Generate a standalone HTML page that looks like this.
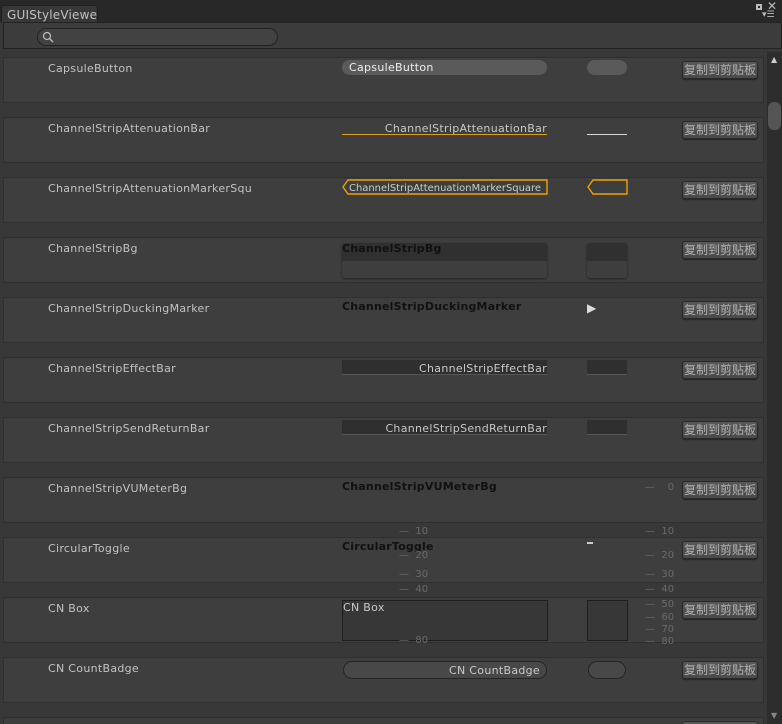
<!DOCTYPE html>
<html><head><meta charset="utf-8"><style>
*{box-sizing:border-box;margin:0;padding:0}
html,body{width:782px;height:724px;overflow:hidden}
body{background:#383838;position:relative;font-family:"DejaVu Sans","Noto Sans CJK SC",sans-serif;font-size:11px;color:#c4c4c4}
.a{position:absolute}
.row{position:absolute;left:3px;width:761px;height:46px;background:#3e3e3e;border:1px solid #2f2f2f}
.lbl{position:absolute;left:48px;font-size:11px;color:#c2c2c2;letter-spacing:.3px}
.btn{position:absolute;left:682px;width:76px;height:18px;background:linear-gradient(#585858,#4a4a4a);border:1px solid #2a2a2a;border-radius:3px;color:#b0b0b0;font-size:12px;font-family:"Noto Sans CJK SC",sans-serif;text-align:center;line-height:16px;box-shadow:0 1px 1px #222}
.b{font-weight:bold;color:#111;font-family:"DejaVu Sans",sans-serif;font-size:11px;letter-spacing:.2px}
.sc{position:absolute;color:#6a6a6a;font-size:10px}
.pt{font-size:11px;color:#c8c8c8;letter-spacing:.3px}
</style></head><body>
<div class="a" style="left:0;top:0;width:782px;height:22px;background:#282828"></div>
<div class="a" style="left:1px;top:5px;width:97px;height:18px;background:#383838;border:1px solid #1f1f1f;border-bottom:none;border-radius:3px 3px 0 0;color:#c0c0c0;font-size:12px;padding:2px 0 0 5px;letter-spacing:.2px">GUIStyleViewe</div>
<div class="a" style="left:756px;top:4px;width:6px;height:6px;border:2px solid #bbb"></div>
<div class="a" style="left:767px;top:-1px;color:#bbb;font-size:12px">✕</div>
<div class="a" style="left:762px;top:10px;color:#bbb;font-size:9px">▾☰</div>
<div class="a" style="left:3px;top:22px;width:779px;height:27px;background:#3c3c3c;border:1px solid #232323"></div>
<div class="a" style="left:37px;top:28px;width:241px;height:18px;background:#424242;border:1px solid #222;border-radius:9px"></div>
<svg class="a" style="left:42px;top:31px" width="12" height="12"><circle cx="5" cy="5" r="3.5" fill="none" stroke="#bbb" stroke-width="1.3"/><line x1="7.5" y1="7.5" x2="11" y2="11" stroke="#bbb" stroke-width="1.4"/></svg>
<div class="a" style="left:767px;top:52px;width:15px;height:672px;background:#2d2d2d"></div>
<div class="a" style="left:771px;top:55px;color:#ccc;font-size:8px">▲</div>
<div class="a" style="left:768px;top:102px;width:13px;height:28px;background:#555;border-radius:6px"></div>
<div class="a" style="left:771px;top:711px;color:#888;font-size:8px">▼</div>

<div class="row" style="top:57px"></div><div class="lbl" style="top:62px">CapsuleButton</div>
<div class="a pt" style="left:342px;top:60px;width:205px;height:15px;background:#5a5a5a;border-radius:8px;color:#eee;padding:1px 0 0 7px">CapsuleButton</div>
<div class="a" style="left:587px;top:60px;width:40px;height:15px;background:#5a5a5a;border-radius:8px"></div>
<div class="btn" style="top:61px">复制到剪贴板</div>

<div class="row" style="top:117px"></div><div class="lbl" style="top:122px">ChannelStripAttenuationBar</div>
<div class="a pt" style="left:342px;top:120px;width:205px;height:15px;border-bottom:1px solid #d8a020;text-align:right;padding-top:2px">ChannelStripAttenuationBar</div>
<div class="a" style="left:587px;top:120px;width:40px;height:15px;border-bottom:1px solid #d8d8d8"></div>
<div class="btn" style="top:121px">复制到剪贴板</div>

<div class="row" style="top:177px"></div><div class="lbl" style="top:182px">ChannelStripAttenuationMarkerSqu</div>
<svg class="a" style="left:341px;top:179px" width="208" height="17"><path d="M7 1H206V15H7L2 8Z" fill="none" stroke="#f0a000" stroke-width="1.4"/><text x="8" y="12" font-size="9.5" fill="#ccc" font-family="DejaVu Sans" textLength="192" lengthAdjust="spacingAndGlyphs">ChannelStripAttenuationMarkerSquare</text></svg>
<svg class="a" style="left:586px;top:179px" width="43" height="17"><path d="M7 1H41V15H7L2 8Z" fill="none" stroke="#f0a000" stroke-width="1.4"/></svg>
<div class="btn" style="top:181px">复制到剪贴板</div>

<div class="row" style="top:237px"></div><div class="lbl" style="top:242px">ChannelStripBg</div>
<div class="a" style="left:342px;top:243px;width:205px;height:35px;background:linear-gradient(#303030 0 18px,#3e3e3e 18px);border-radius:3px;box-shadow:0 1px 2px #222"><span class="b" style="position:absolute;left:0;top:-1px">ChannelStripBg</span></div>
<div class="a" style="left:587px;top:243px;width:40px;height:35px;background:linear-gradient(#303030 0 18px,#3e3e3e 18px);border-radius:3px;box-shadow:0 1px 2px #222"></div>
<div class="btn" style="top:241px">复制到剪贴板</div>

<div class="row" style="top:297px"></div><div class="lbl" style="top:302px">ChannelStripDuckingMarker</div>
<div class="a b" style="left:342px;top:300px">ChannelStripDuckingMarker</div>
<div class="a" style="left:587px;top:301px;color:#ddd;font-size:12px">▶</div>
<div class="btn" style="top:301px">复制到剪贴板</div>

<div class="row" style="top:357px"></div><div class="lbl" style="top:362px">ChannelStripEffectBar</div>
<div class="a pt" style="left:342px;top:360px;width:205px;height:15px;background:#2f2f2f;border-bottom:1px solid #555;text-align:right;padding-top:2px">ChannelStripEffectBar</div>
<div class="a" style="left:587px;top:360px;width:40px;height:15px;background:#2f2f2f;border-bottom:1px solid #555"></div>
<div class="btn" style="top:361px">复制到剪贴板</div>

<div class="row" style="top:417px"></div><div class="lbl" style="top:422px">ChannelStripSendReturnBar</div>
<div class="a pt" style="left:342px;top:420px;width:205px;height:15px;background:#2f2f2f;border-bottom:1px solid #555;text-align:right;padding-top:2px">ChannelStripSendReturnBar</div>
<div class="a" style="left:587px;top:420px;width:40px;height:15px;background:#2f2f2f;border-bottom:1px solid #555"></div>
<div class="btn" style="top:421px">复制到剪贴板</div>

<div class="row" style="top:477px"></div><div class="lbl" style="top:482px">ChannelStripVUMeterBg</div>
<div class="a b" style="left:342px;top:480px">ChannelStripVUMeterBg</div>
<div class="btn" style="top:481px">复制到剪贴板</div>

<div class="row" style="top:537px"></div><div class="lbl" style="top:542px">CircularToggle</div>
<div class="a b" style="left:342px;top:540px">CircularToggle</div>
<div class="a" style="left:587px;top:542px;width:6px;height:2px;background:#ccc"></div>
<div class="btn" style="top:541px">复制到剪贴板</div>

<div class="row" style="top:597px"></div><div class="lbl" style="top:602px">CN Box</div>
<div class="a pt" style="left:342px;top:600px;width:206px;height:41px;background:#373737;border:1px solid #1e1e1e">CN Box</div>
<div class="a" style="left:587px;top:600px;width:41px;height:41px;background:#373737;border:1px solid #1e1e1e"></div>
<div class="btn" style="top:601px">复制到剪贴板</div>

<div class="sc" style="left:399px;top:526px">—&nbsp; 10</div>
<div class="sc" style="left:399px;top:550px">—&nbsp; 20</div>
<div class="sc" style="left:399px;top:569px">—&nbsp; 30</div>
<div class="sc" style="left:399px;top:584px">—&nbsp; 40</div>
<div class="sc" style="left:399px;top:635px">—&nbsp; 80</div>
<div class="sc" style="left:645px;top:482px">—&nbsp;&nbsp;&nbsp; 0</div>
<div class="sc" style="left:645px;top:526px">—&nbsp; 10</div>
<div class="sc" style="left:645px;top:550px">—&nbsp; 20</div>
<div class="sc" style="left:645px;top:569px">—&nbsp; 30</div>
<div class="sc" style="left:645px;top:584px">—&nbsp; 40</div>
<div class="sc" style="left:645px;top:599px">—&nbsp; 50</div>
<div class="sc" style="left:645px;top:612px">—&nbsp; 60</div>
<div class="sc" style="left:645px;top:624px">—&nbsp; 70</div>
<div class="sc" style="left:645px;top:636px">—&nbsp; 80</div>

<div class="row" style="top:657px"></div><div class="lbl" style="top:662px">CN CountBadge</div>
<div class="a pt" style="left:343px;top:661px;width:204px;height:18px;background:#484848;border:1px solid #252525;border-radius:9px;text-align:right;padding:2px 6px 0 0">CN CountBadge</div>
<div class="a" style="left:588px;top:661px;width:38px;height:18px;background:#484848;border:1px solid #252525;border-radius:9px"></div>
<div class="btn" style="top:661px">复制到剪贴板</div>

<div class="a" style="left:3px;top:717px;width:761px;height:7px;background:#3e3e3e;border:1px solid #2f2f2f;border-bottom:none"></div>
<div class="a" style="left:682px;top:721px;width:76px;height:3px;background:#585858;border:1px solid #2a2a2a;border-bottom:none;border-radius:3px 3px 0 0"></div>
</body></html>
